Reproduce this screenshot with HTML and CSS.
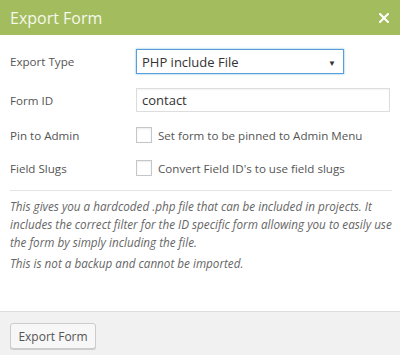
FILE: index.html
```html
<!DOCTYPE html>
<html lang="en">
<head>
    <meta charset="UTF-8">
    <meta name="viewport" content="width=device-width, initial-scale=1.0">
    <title>Export Form</title>
    <link rel="stylesheet" href="styles.css">
</head>
<body>
    <div class="modal">
        <div class="modal-header">
            <h2>Export Form</h2>
            <span class="close-btn">
                <svg width="10" height="10" viewBox="0 0 10 10">
                    <path d="M1 1 L9 9 M9 1 L1 9" stroke="#fff" stroke-width="2" stroke-linecap="square"/>
                </svg>
            </span>
        </div>

        <div class="modal-body">
            <div class="row row-select">
                <label class="row-label" for="exportType">Export Type</label>
                <div class="select-wrap">
                    <select id="exportType">
                        <option>PHP include File</option>
                        <option>JSON</option>
                    </select>
                </div>
            </div>

            <div class="row row-input">
                <label class="row-label" for="formId">Form ID</label>
                <input type="text" id="formId" value="contact">
            </div>

            <div class="row row-check">
                <span class="row-label">Pin to Admin</span>
                <label class="check"><input type="checkbox"> Set form to be pinned to Admin Menu</label>
            </div>

            <div class="row row-check">
                <span class="row-label">Field Slugs</span>
                <label class="check"><input type="checkbox"> Convert Field ID's to use field slugs</label>
            </div>

            <hr>

            <p class="description">This gives you a hardcoded .php file that can be included in projects. It includes the correct filter for the ID specific form allowing you to easily use the form by simply including the file.</p>
            <p class="description">This is not a backup and cannot be imported.</p>
        </div>

        <div class="modal-footer">
            <button class="export-btn">Export Form</button>
        </div>
    </div>
</body>
</html>
```

FILE: styles.css
```css
* {
    margin: 0;
    padding: 0;
    box-sizing: border-box;
}

body {
    font-family: 'Open Sans', 'Liberation Sans', sans-serif;
    background: #fff;
    color: #555;
    width: 400px;
    height: 355px;
    overflow: hidden;
}

.modal {
    display: flex;
    flex-direction: column;
    height: 355px;
}

.modal-header {
    height: 35px;
    background: #a3bc5d;
    display: flex;
    align-items: center;
    justify-content: space-between;
    padding: 0 8px 0 10px;
}

.modal-header h2 {
    font-size: 16px;
    font-weight: 400;
    color: #f5f8ec;
}

.close-btn {
    display: flex;
    align-items: center;
    justify-content: center;
    width: 16px;
    height: 16px;
}

.modal-body {
    flex: 1;
    padding: 14px 6px 0 10px;
}

.row {
    display: flex;
    align-items: center;
    font-size: 11.6px;
}

.row-label {
    width: 126px;
    flex-shrink: 0;
    color: #555;
}

.row-select {
    height: 25px;
    margin-bottom: 14px;
}

.row-input {
    height: 24px;
    margin-bottom: 15px;
}

.row-check {
    height: 16px;
    margin-bottom: 17px;
}

.select-wrap {
    position: relative;
    width: 208px;
}

.select-wrap::after {
    content: "\25BC";
    position: absolute;
    right: 8px;
    top: 8px;
    font-size: 8px;
    color: #333;
    pointer-events: none;
}

select {
    appearance: none;
    -webkit-appearance: none;
    width: 208px;
    height: 25px;
    padding: 0 5px;
    font-family: inherit;
    font-size: 13px;
    color: #333;
    background: #fff;
    border: 1px solid #5b9dd9;
    box-shadow: 0 0 2px rgba(30, 140, 190, 0.6);
    border-radius: 0;
    outline: none;
}

input[type="text"] {
    width: 254px;
    height: 24px;
    padding: 0 5px;
    font-family: inherit;
    font-size: 13px;
    color: #333;
    border: 1px solid #ddd;
    box-shadow: inset 0 1px 2px rgba(0, 0, 0, 0.05);
    outline: none;
}

.check {
    display: flex;
    align-items: center;
    gap: 6px;
    white-space: nowrap;
    font-size: 11.6px;
    color: #555;
}

input[type="checkbox"] {
    appearance: none;
    -webkit-appearance: none;
    flex-shrink: 0;
    width: 16px;
    height: 16px;
    border: 1px solid #c4c7ca;
    background: #fff;
    box-shadow: inset 0 1px 2px rgba(0, 0, 0, 0.08);
}

hr {
    border: none;
    border-top: 1px solid #e5e5e5;
    margin: -3px 2px 6px 0;
}

.description {
    font-size: 11.7px;
    font-style: italic;
    line-height: 18px;
    color: #666;
    margin-bottom: 3px;
}

.modal-footer {
    height: 44px;
    background: #f1f1f1;
    border-top: 1px solid #ddd;
    padding: 11px 10px 0;
}

.export-btn {
    width: 86px;
    height: 26px;
    font-family: inherit;
    font-size: 12px;
    color: #555;
    background: #f7f7f7;
    border: 1px solid #ccc;
    border-radius: 3px;
    box-shadow: 0 1px 0 #ccc;
    cursor: pointer;
}
```
